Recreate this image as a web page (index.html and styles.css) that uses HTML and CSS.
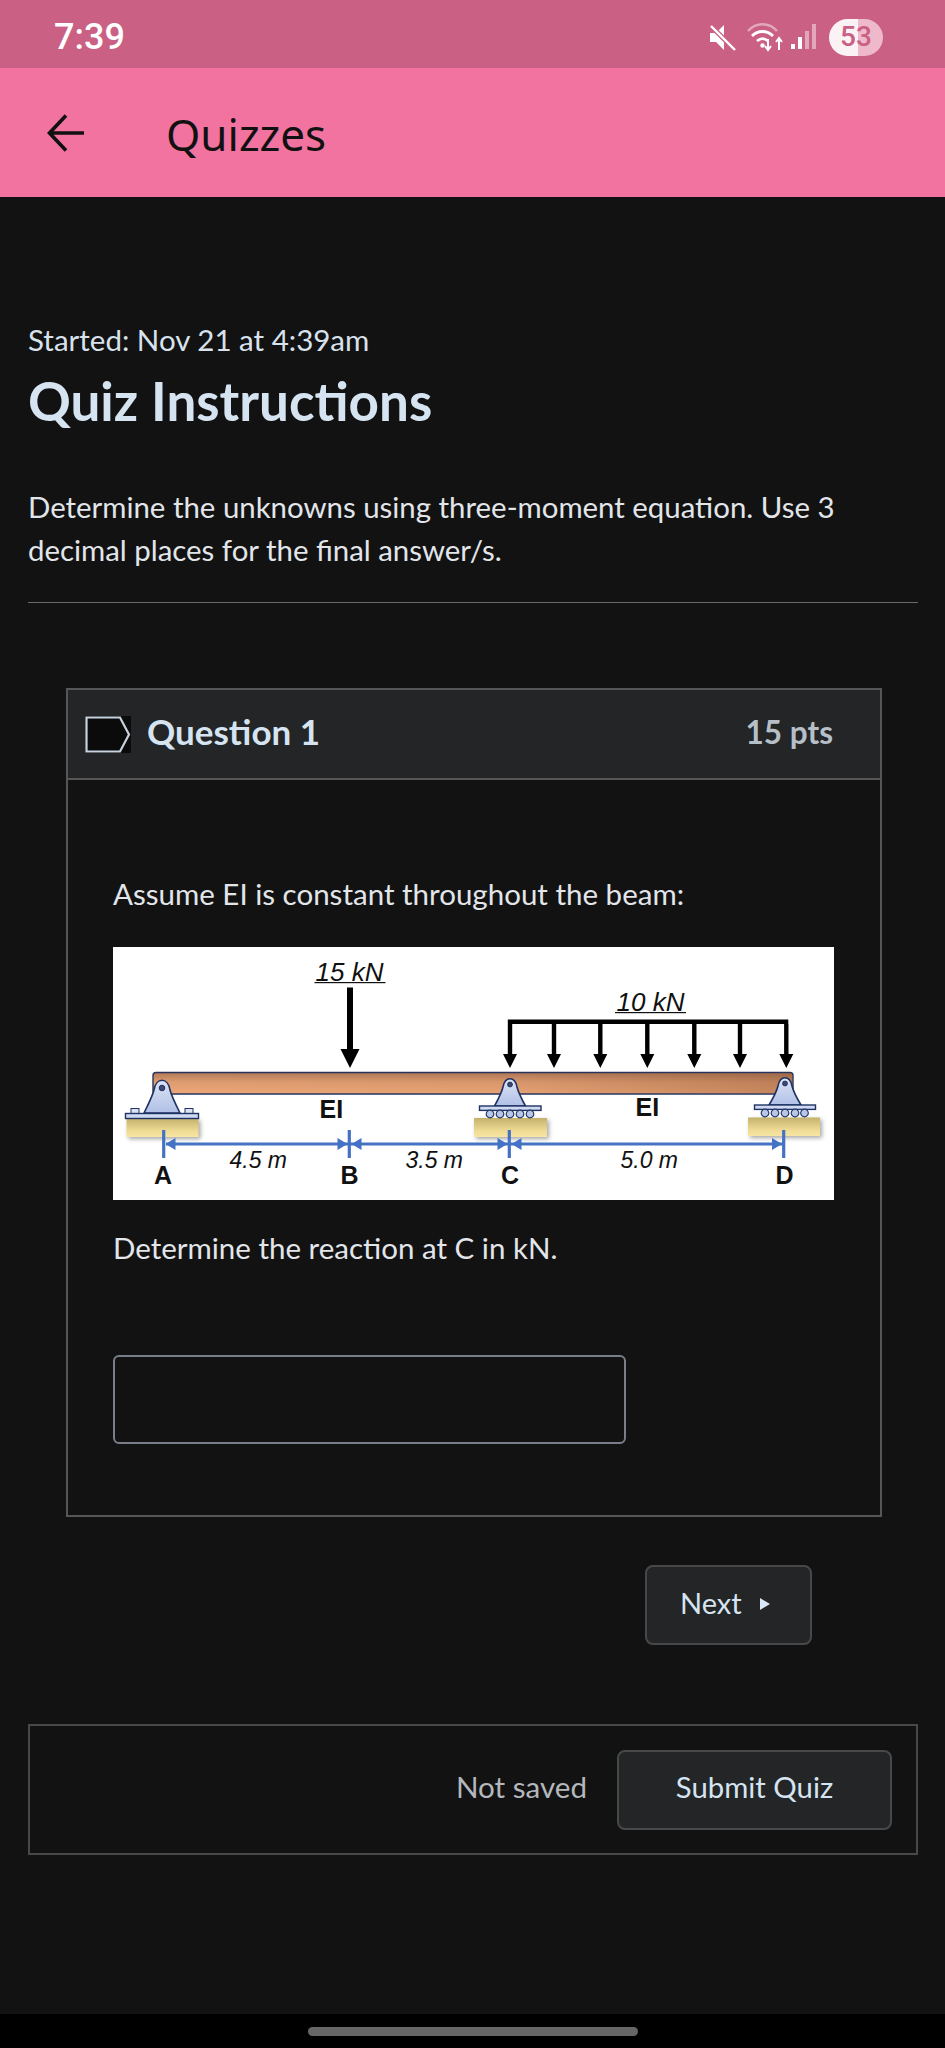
FILE: index.html
```html
<!DOCTYPE html>
<html lang="en">
<head>
<meta charset="utf-8">
<title>Quizzes</title>
<link rel="stylesheet" href="styles.css">
</head>
<body>
<div class="phone">
  <div class="status-bar">
    <span class="time">7:39</span>
    <div class="status-icons">
      <svg class="ic-mute" width="27" height="27" viewBox="0 0 27 27"><path d="M1 9h6l8-8v25l-8-8H1z" fill="#fff"/><path d="M1 1l25 25" stroke="#cb6285" stroke-width="5"/><path d="M2 2l24 24" stroke="#fff" stroke-width="2.4"/></svg>
      <svg class="ic-wifi" width="38" height="30" viewBox="0 0 38 30" fill="none"><path d="M1 9C9 0 22 0 30 9" stroke="#fff" stroke-opacity=".45" stroke-width="2.6"/><path d="M5 14C11 8 20 8 26 14" stroke="#fff" stroke-width="2.8"/><path d="M10 19c3.500-3 7.500-3 11 0" stroke="#fff" stroke-width="2.8"/><circle cx="15.500" cy="23.500" r="2.200" fill="#fff"/><path d="M21 17v10m-3-3 3 4 3-4M32 28V17m-3 3 3-4 3 4" stroke="#fff" stroke-width="2"/></svg>
      <svg class="ic-signal" width="26" height="26" viewBox="0 0 26 26"><rect x="0" y="20" width="4" height="5" fill="#fff"/><rect x="7" y="13" width="4" height="12" fill="#fff"/><rect x="14" y="7" width="4" height="18" fill="#fff" fill-opacity=".45"/><rect x="21" y="0" width="4" height="25" fill="#fff" fill-opacity=".45"/></svg>
      <div class="battery"><span class="battery-num">53</span></div>
    </div>
  </div>
  <header class="app-bar">
    <svg class="back" width="38" height="38" viewBox="0 0 38 38" fill="none"><path d="M37 19H3M19 1.500 2.500 19 19 36.500" stroke="#111" stroke-width="3.600"/></svg>
    <h1 class="app-title">Quizzes</h1>
  </header>
  <main class="content">
    <p class="started">Started: Nov 21 at 4:39am</p>
    <h2 class="heading">Quiz Instructions</h2>
    <p class="instructions">Determine the unknowns using three-moment equation. Use 3 decimal places for the final answer/s.</p>
    <hr class="rule">
    <section class="question">
      <div class="q-head">
        <div class="q-title">
          <svg class="flag" width="46" height="37" viewBox="0 0 46 37"><rect width="46" height="37" fill="#0b0b0c"/><path d="M1.500 1.500H35L44 18.500 35 35.500H1.500z" fill="#0b0b0c" stroke="#c8d3df" stroke-width="2.200"/></svg>
          <span class="q-name">Question 1</span>
        </div>
        <span class="q-pts">15 pts</span>
      </div>
      <div class="q-body">
        <p class="q-text">Assume EI is constant throughout the beam:</p>
        <svg class="beam" width="721" height="253" viewBox="0 0 721 253">
          <defs>
            <linearGradient id="wood" x1="0" y1="0" x2="0" y2="1"><stop offset="0" stop-color="#b07a58"/><stop offset=".45" stop-color="#df9c70"/><stop offset="1" stop-color="#eda878"/></linearGradient>
            <linearGradient id="shade" x1="0" y1="0" x2="1" y2="0"><stop offset="0" stop-color="#64321a" stop-opacity="0"/><stop offset=".55" stop-color="#64321a" stop-opacity=".05"/><stop offset="1" stop-color="#64321a" stop-opacity=".28"/></linearGradient>
            <linearGradient id="sand" x1="0" y1="0" x2="0" y2="1"><stop offset="0" stop-color="#c4b26c"/><stop offset=".7" stop-color="#f0dc95"/><stop offset="1" stop-color="#f6e6a4"/></linearGradient>
            <linearGradient id="steel" x1="0" y1="0" x2="0" y2="1"><stop offset="0" stop-color="#dbe3f5"/><stop offset="1" stop-color="#b1c0e6"/></linearGradient>
            <g id="down"><path d="M-2.200 0h4.400v30h4.800L0 44-7 30h4.800z" fill="#000"/></g>
            <g id="roller"><circle r="3.800" fill="#b9c7e6" stroke="#26386c" stroke-width="1.200"/></g>
          </defs>
          <rect class="fill-white" width="721" height="253"/>
          <rect x="40" y="125.500" width="640" height="21.500" rx="3" fill="url(#wood)" stroke="#28335c" stroke-width="1.400"/>
          <rect x="41" y="126.500" width="638" height="19.500" rx="2" fill="url(#shade)"/>
          <!-- supports -->
          <g class="ground-g"><rect x="13.500" y="171.500" width="72" height="18.500" fill="url(#sand)"/><rect x="361" y="171" width="73" height="19" fill="url(#sand)"/><rect x="635" y="170.500" width="72" height="18.500" fill="url(#sand)"/></g>
          <path d="M31 166C38 152 40 147 41 143C43 130 55 130 57 143C58 147 60 152 67 166z" fill="url(#steel)" stroke="#1f3263" stroke-width="1.600"/>
          <circle cx="49" cy="141" r="2.800" fill="#3f4a70" stroke="#1f3263"/>
          <rect x="18" y="161.500" width="8" height="5" fill="#dbe3f5" stroke="#1f3263"/>
          <rect x="72" y="161.500" width="8" height="5" fill="#dbe3f5" stroke="#1f3263"/>
          <rect x="12.500" y="166.500" width="73" height="5" fill="#cfdaf2" stroke="#1f3263" stroke-width="1.400"/>
          <path d="M381.500 159C387 149 389 144 390 140C392 129 402 129 404 140C405 144 407 149 412.500 159z" fill="url(#steel)" stroke="#1f3263" stroke-width="1.600"/>
          <circle cx="397" cy="137.500" r="2.400" fill="#3f4a70" stroke="#1f3263"/>
          <rect x="366.500" y="159" width="61.500" height="4.400" fill="#cfdaf2" stroke="#1f3263" stroke-width="1.400"/>
          <use href="#roller" x="377" y="167"/><use href="#roller" x="387" y="167"/><use href="#roller" x="397" y="167"/><use href="#roller" x="407" y="167"/><use href="#roller" x="417" y="167"/>
          <path d="M656 158C662 148 664 143 665 139C667 128 677 128 679 139C680 143 682 148 688 158z" fill="url(#steel)" stroke="#1f3263" stroke-width="1.600"/>
          <circle cx="672" cy="136.500" r="2.400" fill="#3f4a70" stroke="#1f3263"/>
          <rect x="641.500" y="158" width="61" height="4.400" fill="#cfdaf2" stroke="#1f3263" stroke-width="1.400"/>
          <use href="#roller" x="652" y="166"/><use href="#roller" x="662" y="166"/><use href="#roller" x="672" y="166"/><use href="#roller" x="682" y="166"/><use href="#roller" x="691.500" y="166"/>
          <!-- point load -->
          <path d="M234 40.500h6V102h6.500L237 121 227.500 102h6.500z" fill="#000"/>
          <text class="lbl-i" x="202.500" y="34">15 kN</text><rect x="201.500" y="35" width="71" height="1.200" fill="#111"/>
          <!-- distributed load -->
          <text class="lbl-i" x="503.500" y="63.500">10 kN</text><rect x="502" y="65" width="71" height="1.200" fill="#111"/>
          <rect x="394.800" y="72.500" width="280.500" height="4.500" fill="#000"/>
          <use href="#down" x="397" y="77"/><use href="#down" x="441" y="77"/><use href="#down" x="487.300" y="77"/><use href="#down" x="534.300" y="77"/><use href="#down" x="581.300" y="77"/><use href="#down" x="627" y="77"/><use href="#down" x="673.300" y="77"/>
          <!-- dimensions -->
          <g class="dim">
            <path d="M50.700 183v28M236.300 183v28M396.300 183v28M670.700 183v28" stroke-width="3.200"/>
            <path d="M53 197H670" stroke-width="2.800"/>
          </g>
          <path d="M52.500 197l10-6v12zM234.500 197l-10-6v12zM238.500 197l10-6v12zM394.500 197l-10-6v12zM398.500 197l10-6v12zM669 197l-10-6v12z" fill="#4472c4"/>
          <text class="lbl-i sm" x="116.500" y="220.500">4.5 m</text>
          <text class="lbl-i sm" x="292.500" y="220.500">3.5 m</text>
          <text class="lbl-i sm" x="507.500" y="220.500">5.0 m</text>
          <text class="lbl-b" x="206.500" y="170.500">EI</text>
          <text class="lbl-b" x="522.500" y="169">EI</text>
          <text class="lbl-b mid" x="50" y="237">A</text>
          <text class="lbl-b mid" x="236.500" y="237">B</text>
          <text class="lbl-b mid" x="397" y="237">C</text>
          <text class="lbl-b mid" x="671.500" y="237">D</text>
        </svg>
        <p class="q-text q-ask">Determine the reaction at C in kN.</p>
        <input class="answer" type="text" aria-label="Answer">
      </div>
    </section>
    <div class="next-row"><button class="btn btn-next" type="button"><span class="btn-label">Next</span><svg class="tri" width="10" height="12" viewBox="0 0 10 12"><path d="M0 0l10 6-10 6z" fill="#dbe8f5"/></svg></button></div>
    <div class="submit-bar">
      <span class="not-saved">Not saved</span>
      <button class="btn btn-submit" type="button"><span class="btn-label">Submit Quiz</span></button>
    </div>
  </main>
  <div class="nav-bar"><div class="pill"></div></div>
</div>
</body>
</html>
```
FILE: styles.css
```css
* { box-sizing: border-box; }
html, body { margin: 0; padding: 0; }
body { background: #121212; font-family: Lato, "Open Sans", sans-serif; color: #dde4ec; }
.phone { width: 945px; height: 2048px; display: flex; flex-direction: column; overflow: hidden; }
.status-bar { height: 68px; background: #ca6084; display: flex; align-items: center; justify-content: space-between; padding: 0 62px 0 54px; flex: none; }
.time { font-family: Roboto, sans-serif; font-weight: 500; font-size: 36px; color: #fff; line-height: 1; margin-top: 6px; }
.status-icons { display: flex; align-items: center; margin-top: 6px; }
.ic-mute { margin-right: 11px; }
.ic-wifi { margin-right: 6px; }
.ic-signal { margin-right: 12px; }
.battery { width: 54px; height: 37px; border-radius: 19px; background: linear-gradient(90deg, #fbf2f5 0, #fbf2f5 53%, #eebacb 53%, #eebacb 100%); display: flex; align-items: center; justify-content: center; }
.battery-num { font-family: Roboto, sans-serif; font-weight: 500; font-size: 28px; color: #ca6084; line-height: 1; }
.app-bar { height: 129px; background: #f2739f; display: flex; align-items: center; padding-left: 47px; flex: none; }
.back { margin-right: 81px; }
.app-title { margin: 3px 0 0; font-family: "Noto Sans", sans-serif; font-weight: 400; font-size: 44px; color: #111; }
.content { flex: 1; padding: 0 27px 0 28px; }
.started { margin: 125px 0 0; font-size: 29.5px; line-height: 36px; color: #d8e2ec; }
.heading { margin: 12px 0 0; font-size: 53px; font-weight: 700; line-height: 62px; color: #d6e4f2; }
.instructions { margin: 53px 0 0; font-size: 29.4px; line-height: 43px; color: #e2e6ea; }
.rule { margin: 31px 0 0; border: 0; height: 1px; background: #6a6a6a; }
.question { margin: 85px 0 0 38px; width: 816px; height: 829px; border: 2px solid #565656; }
.q-head { height: 90px; background: #232526; border-bottom: 2px solid #565656; display: flex; align-items: center; justify-content: space-between; padding: 0 47px 0 17px; }
.q-title { display: flex; align-items: center; }
.flag { margin-right: 16px; }
.q-name { font-size: 35px; font-weight: 700; color: #d6e4f2; margin-top: -7px; }
.q-pts { font-size: 31.5px; font-weight: 700; color: #b6bfc8; margin-top: -4px; }
.q-body { padding: 94px 0 0 45px; }
.q-text { margin: 0; font-size: 29.5px; line-height: 40px; color: #e2e6ea; }
.beam { display: block; margin-top: 33px; }
.fill-white { fill: #fff; }
.lbl-i { font-family: "Liberation Sans", sans-serif; font-style: italic; font-size: 26px; fill: #111; }
.lbl-i.sm { font-size: 23px; }
.lbl-b { font-family: "Liberation Sans", sans-serif; font-weight: 700; font-size: 25px; fill: #111; }
.lbl-b.mid { text-anchor: middle; }
.dim { fill: none; stroke: #4472c4; }
.ground-g { filter: drop-shadow(2px 2px 2px rgba(0, 0, 0, .35)); }
.q-ask { margin-top: 28px; }
.answer { display: block; margin-top: 87px; width: 513px; height: 89px; background: #121212; border: 2px solid #7a7e88; border-radius: 6px; }
.next-row { display: flex; justify-content: flex-end; margin-top: 48px; padding-right: 106px; }
.btn { font-family: Lato, sans-serif; color: #d6e4f2; background: #232526; border: 2px solid #46484a; border-radius: 8px; }
.btn-label { position: relative; top: -3px; }
.btn-next { width: 167px; height: 80px; font-size: 29px; display: flex; align-items: center; padding: 0 0 0 33px; }
.tri { margin-left: 18px; margin-top: -3px; }
.submit-bar { margin-top: 79px; height: 131px; border: 2px solid #484848; display: flex; align-items: center; justify-content: flex-end; padding-right: 24px; }
.not-saved { font-size: 29.6px; color: #b4b8bc; margin-right: 30px; margin-top: -6px; }
.btn-submit { width: 275px; height: 80px; font-size: 29.3px; }
.nav-bar { height: 34px; background: #000; flex: none; display: flex; justify-content: center; padding-top: 13px; }
.pill { width: 330px; height: 9px; border-radius: 5px; background: #666; }
```
